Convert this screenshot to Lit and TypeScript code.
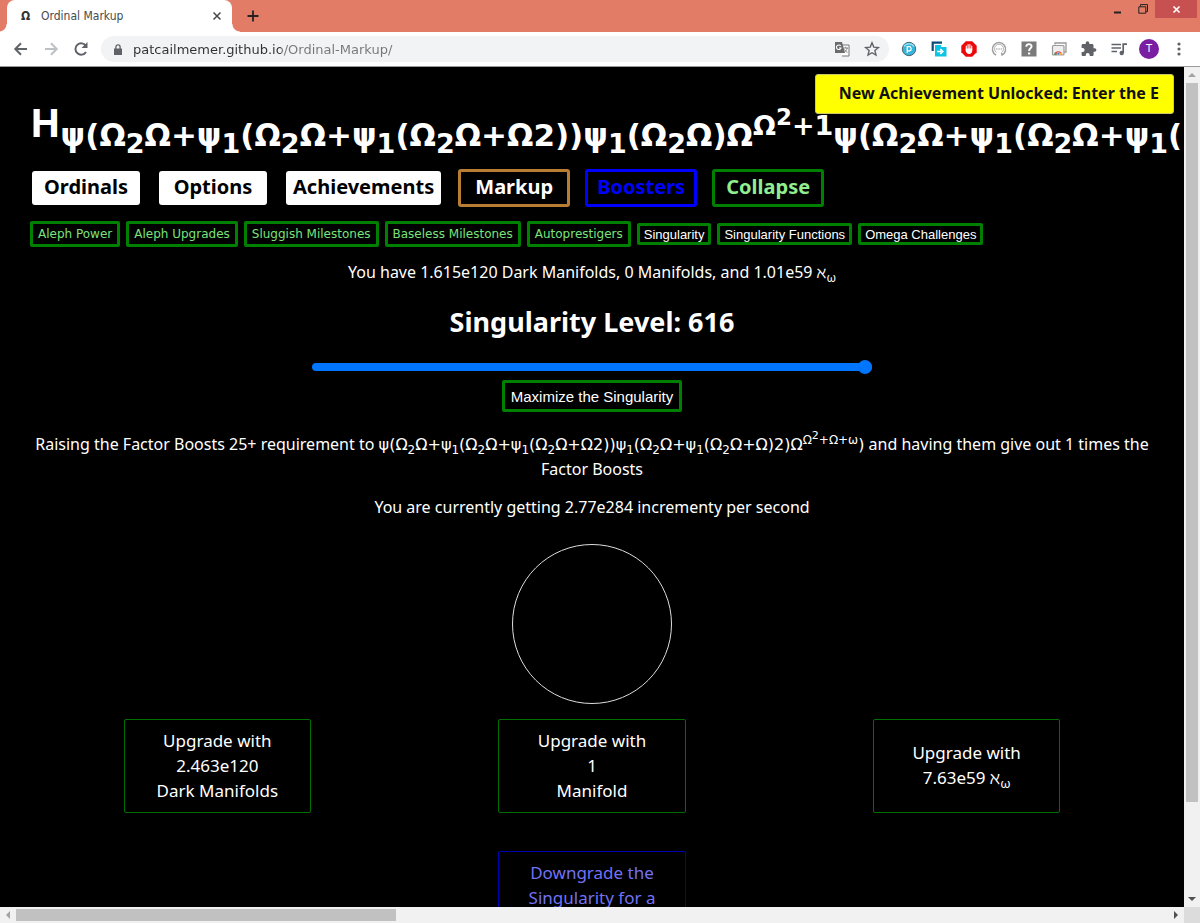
import { LitElement, html, css, svg, TemplateResult } from "lit";
import { customElement, property, state } from "lit/decorators.js";
import { classMap } from "lit/directives/class-map.js";

const icon = (body: TemplateResult, size = 18, box = 18) =>
  html`<svg width=${size} height=${size} viewBox="0 0 ${box} ${box}" aria-hidden="true">${body}</svg>`;

const back = svg`<path d="M15 9H3.5M9 3.3 3.3 9 9 14.7" fill="none" stroke="#5f6368" stroke-width="2"/>`;
const forward = svg`<path d="M3 9h11.500M9 3.300 14.700 9 9 14.700" fill="none" stroke="#bdc1c6" stroke-width="2"/>`;
const reload = svg`<path d="M14 12a5.700 5.700 0 1 1 0-6" fill="none" stroke="#5f6368" stroke-width="2"/><path d="M15.500 2v6H9.500z" fill="#5f6368"/>`;
const lock = svg`<path d="M1 4.500h8V11H1z" fill="#5f6368"/><path d="M2.900 5V3a2.100 2.100 0 0 1 4.200 0v2" fill="none" stroke="#5f6368" stroke-width="1.300"/>`;
const translate = svg`<path d="M7 5h9v11H9" fill="#fff" stroke="#777" stroke-width="1"/><path d="M2 2h7l3 11H2z" fill="#6b6b6b"/><path d="M7.700 5.900A2.300 2.300 0 1 0 8 8H6" fill="none" stroke="#fff" stroke-width="1.100"/><path d="M10.500 8h4.500M12.700 6.800V8m1.500 0c-.4 2-1.500 3.400-2.700 4.200M11.600 9.500c.8 1.600 1.700 2.300 2.900 2.900" fill="none" stroke="#777" stroke-width=".9"/>`;
const star = svg`<path d="m9 2.800 1.800 4.300 4.600.4-3.500 3.100 1.100 4.500-4-2.400-4 2.400 1.100-4.500-3.500-3.100 4.600-.4z" fill="none" stroke="#5f6368" stroke-width="1.400"/>`;
const bubble = svg`<circle cx="9" cy="9" r="6.700" fill="#35b5dc" stroke="#51646d" stroke-width="1"/><path d="M4 6.500a6 6 0 0 1 10 0" fill="none" stroke="#91dff2" stroke-width="1.500"/><path d="M7.200 13V6.700h1.900a2.100 2.100 0 1 1-1.900 3" fill="none" stroke="#fff" stroke-width="1.200"/>`;
const tabs = svg`<path d="M2.700 11V2.700H12" fill="none" stroke="#0b4a75" stroke-width="2.200"/><path d="M5 5h6v2h5.500v9.500H5z" fill="#0cc4e3"/><path d="M7 11.500h5.500M10.300 9.100l2.500 2.400-2.500 2.400" fill="none" stroke="#fff" stroke-width="1.700"/>`;
const hand = svg`<path d="M5.800 1.300h6.400l4.500 4.500v6.400l-4.500 4.500H5.800l-4.500-4.500V5.800z" fill="#ec0909"/><path d="M6.300 10V6M8.100 9V4.600M9.900 9V4.600M11.700 10V6" stroke="#fff" stroke-width="1.100" stroke-linecap="round"/><path d="M5.700 8.500h6.500v2.300c0 2-1.200 3.200-3 3.200-2.300 0-3-1.600-3.500-3z" fill="#fff"/>`;
const ring = svg`<path d="M6 15A6.600 6.600 0 1 1 12 15l-.5-2" fill="none" stroke="#a0a0a0" stroke-width="1.500"/><path d="M6.500 12.500a4.500 4.500 0 1 1 5 0" fill="none" stroke="#b3b3b3" stroke-width="1"/><path d="M6 9h6" stroke="#999" stroke-width="1.200" stroke-dasharray="1.500 .8"/>`;
const question = svg`<path d="M1.500 1.500h15v15h-15z" fill="#7b7b7b"/><path d="M6.300 6.700c0-3.300 5.300-3.300 5.300-.4C11.600 8.400 9.100 8.300 9.100 11" fill="none" stroke="#fff" stroke-width="1.900"/><path d="M8 12.500h2.200v2H8z" fill="#fff"/>`;
const cast = svg`<path d="M5 4.500V3h11v9h-1.800" fill="none" stroke="#999" stroke-width="1.300"/><rect x="2.500" y="5.500" width="11.500" height="9.500" rx="1" fill="#eee" stroke="#999" stroke-width="1.200"/><path d="M4.200 14.800a4.200 4.200 0 0 1 8.300 0z" fill="#e34332"/><path d="M4.200 14.800a4.200 4.200 0 0 1 1-2.700l2 2.700z" fill="#33a552"/><path d="M9.500 14.800l1.500-2.900a4 4 0 0 1 1.500 2.900z" fill="#f6c52b"/><circle cx="8.400" cy="13.700" r="1.400" fill="#3d7de0" stroke="#fff" stroke-width=".5"/>`;
const puzzle = svg`<path d="M14.600 8.200h-1.100V5.400c0-.8-.6-1.400-1.400-1.400H9.300V3a1.800 1.800 0 0 0-3.600 0v1H3c-.8 0-1.400.6-1.400 1.400V8h1a2 2 0 0 1 0 4h-1v2.700c0 .8.600 1.400 1.400 1.400h2.700v-1a2 2 0 0 1 4 0v1h2.500c.8 0 1.400-.6 1.400-1.400v-2.900h1a1.800 1.800 0 0 0 0-3.600z" fill="#5f6368"/>`;
const playlist = svg`<path d="M1.500 4.500h9.500M1.500 8h9.500M1.500 11.500H7" stroke="#5f6368" stroke-width="1.500"/><path d="M13.200 13V4.200H17" fill="none" stroke="#5f6368" stroke-width="1.700"/><circle cx="11.700" cy="13" r="2.200" fill="#5f6368"/>`;
const dots = svg`<circle cx="9" cy="4" r="1.600" fill="#5f6368"/><circle cx="9" cy="9" r="1.600" fill="#5f6368"/><circle cx="9" cy="14" r="1.600" fill="#5f6368"/>`;

@customElement("browser-chrome")
export class BrowserChrome extends LitElement {
  @state() private address = "patcailmemer.github.io/Ordinal-Markup/";

  static styles = css`
    :host { display: block; font-family: "DejaVu Sans Condensed", "Noto Sans", sans-serif; }
    button { border: 0; padding: 0; background: none; font: inherit; display: grid; place-items: center; }
    .strip { height: 32px; background: #e27c66; display: flex; align-items: stretch; padding-left: 7px; }
    .tab { position: relative; width: 225px; background: #fff; border-radius: 8px 8px 0 0; display: flex; align-items: center; box-sizing: border-box; padding: 0 7px 0 14px; color: #45494d; font-size: 12px; }
    .tab::before, .tab::after { content: ""; position: absolute; bottom: 0; width: 8px; height: 8px; }
    .tab::before { left: -8px; background: radial-gradient(circle at 0 0, transparent 7px, #fff 8px); }
    .tab::after { right: -8px; background: radial-gradient(circle at 100% 0, transparent 7px, #fff 8px); }
    .favicon { width: 12px; color: #333; font-size: 12px; font-weight: bold; margin-right: 8px; }
    .title { flex: 1; }
    .close { width: 16px; height: 16px; }
    .new { width: 42px; }
    .window { margin-left: auto; display: flex; height: 18px; padding-right: 3px; }
    .window button { width: 25px; }
    .window .quit { width: 42px; background: #c75050; }
    .bar { height: 34px; background: #fff; border-bottom: 1px solid #9b9b9b; display: flex; align-items: center; padding: 0 6px; }
    .bar button { width: 30px; height: 30px; flex: none; }
    .address { flex: 1; height: 26px; margin: 0 5px; padding: 0 2px 0 12px; border-radius: 13px; background: #f1f3f4; display: flex; align-items: center; }
    .address input { flex: 1; min-width: 0; border: 0; padding: 0; margin-left: 9px; outline: 0; font: 13px "DejaVu Sans", sans-serif; color: transparent; background: linear-gradient(90deg, #303134 148px, #73777b 148px); -webkit-background-clip: text; background-clip: text; }
    .avatar span { width: 20px; height: 20px; line-height: 20px; border-radius: 50%; background: #7b1fa2; color: #fff; font-size: 11px; text-align: center; }
  `;

  render() {
    const extensions: [string, TemplateResult][] = [
      ["Translator", bubble], ["Tab tool", tabs], ["Ad blocker", hand], ["Recorder", ring],
      ["Help", question], ["Remote", cast], ["Extensions", puzzle], ["Media", playlist],
    ];
    return html`
      <div class="strip">
        <div class="tab">
          <span class="favicon">Ω</span><span class="title">Ordinal Markup</span>
          <button class="close" aria-label="Close tab">${icon(svg`<path d="m1.500 1.500 7 7m0-7-7 7" stroke="#45494d" stroke-width="1.500"/>`, 10, 10)}</button>
        </div>
        <button class="new" aria-label="New tab">${icon(svg`<path d="M6 .5v11M.5 6h11" stroke="#222" stroke-width="1.800"/>`, 12, 12)}</button>
        <div class="window">
          <button aria-label="Minimize">${icon(svg`<path d="M1 8.500h7" stroke="#222" stroke-width="2"/>`, 10, 10)}</button>
          <button aria-label="Restore">${icon(svg`<path d="M.8 2.800h7v6.400h-7zM2.500 2.500V.6h7v7H8" fill="none" stroke="#222"/>`, 10, 10)}</button>
          <button class="quit" aria-label="Close">${icon(svg`<path d="m1.500 1.500 6 6m0-6-6 6" stroke="#fff" stroke-width="1.700"/>`, 9, 9)}</button>
        </div>
      </div>
      <div class="bar">
        <button aria-label="Back">${icon(back)}</button>
        <button aria-label="Forward">${icon(forward)}</button>
        <button aria-label="Reload">${icon(reload)}</button>
        <div class="address">
          ${icon(lock, 11, 11)}
          <input type="text" aria-label="Address" spellcheck="false" .value=${this.address} />
          <button aria-label="Translate page">${icon(translate)}</button>
          <button aria-label="Bookmark">${icon(star)}</button>
        </div>
        ${extensions.map(([label, body]) => html`<button aria-label=${label}>${icon(body)}</button>`)}
        <button class="avatar" aria-label="Profile"><span>T</span></button>
        <button aria-label="Menu">${icon(dots)}</button>
      </div>
    `;
  }
}

@customElement("scroll-bar")
export class ScrollBar extends LitElement {
  @property({ type: Boolean, reflect: true }) vertical = false;
  @property({ type: Number }) share = 50;

  static styles = css`
    :host { display: flex; background: #f1f1f1; height: 16px; }
    :host([vertical]) { flex-direction: column; height: auto; width: 16px; }
    .end { width: 16px; height: 16px; flex: none; display: grid; place-items: center; }
    .track { flex: 1; padding: 2px 0; }
    :host([vertical]) .track { padding: 0 2px; }
    .thumb { background: #c1c1c1; height: 100%; }
  `;

  render() {
    const size = this.vertical ? `height:${this.share}%` : `width:${this.share}%`;
    const [start, end] = this.vertical
      ? [svg`<path d="M0 6 4 2l4 4z" fill="#a3a3a3"/>`, svg`<path d="m0 2 4 4 4-4z" fill="#505050"/>`]
      : [svg`<path d="M6 0 2 4l4 4z" fill="#a3a3a3"/>`, svg`<path d="m2 0 4 4-4 4z" fill="#505050"/>`];
    return html`
      <div class="end">${icon(start, 8, 8)}</div>
      <div class="track"><div class="thumb" style=${size}></div></div>
      <div class="end">${icon(end, 8, 8)}</div>
    `;
  }
}

@customElement("app-root")
export class AppRoot extends LitElement {
  @state() private level = 616;

  static styles = css`
    :host { display: flex; flex-direction: column; height: 100vh; overflow: hidden; background: #000; color: #fff; font-family: "Noto Sans", "DejaVu Sans", sans-serif; font-size: 16px; line-height: 25px; }
    .view { flex: 1; min-height: 0; display: grid; grid-template: minmax(0, 1fr) 16px / minmax(0, 1fr) 16px; }
    .corner { background: #dcdcdc; }
    .page { position: relative; overflow: hidden; padding: 29px 30px 0; }
    .toast { position: absolute; top: 7px; right: 10px; box-sizing: border-box; height: 40px; padding: 0 14px 0 23px; border: 1px solid #c9c96a; border-radius: 3px; background: #ff0; color: #111; font-weight: bold; line-height: 36px; white-space: nowrap; }
    button { box-sizing: border-box; margin: 0; background: #000; border-radius: 3px; }
    h1 { margin: 0; height: 73px; font: bold 40px/52px "Noto Sans", sans-serif; white-space: nowrap; }
    sub, sup { line-height: 0; }
    h1 sub { font-family: "DejaVu Sans", sans-serif; font-size: 31px; }
    h1 sub sub, h1 sub sup { font-size: 27px; }
    h1 sup sup { font-size: 23px; }
    .formula { font-family: "DejaVu Sans", sans-serif; }
    p sub, p sup { font-size: 12px; }
    p sup sup { font-size: 11px; }
    .card sub { font-size: 13px; }
    .tabs { display: flex; gap: 15px; }
    .tabs button { min-width: 112px; height: 38px; padding: 0 5px 3px; border: 3px solid; font: bold 20px "Noto Sans", sans-serif; color: #fff; }
    .tabs .plain { background: #fff; background-clip: padding-box; color: #000; border: 2px solid transparent; border-radius: 5px; padding: 0 7px 3px; }
    .tabs .markup { border-color: #b87d33; }
    .tabs .boosters { border-color: #00f; color: #00f; }
    .tabs .collapse { border-color: #008000; color: #90ee90; }
    .subtabs { display: flex; align-items: center; gap: 6px; margin-top: 14px; }
    .subtabs button { height: 22px; padding: 0 4px; border: 3px solid #008000; border-radius: 2px; font: 13px "Liberation Sans", sans-serif; color: #fff; }
    .subtabs .wide { height: 26px; padding: 0 5px; font: 12px "DejaVu Sans", sans-serif; color: #7be37b; }
    p { margin: 13px 0 0; text-align: center; }
    h2 { margin: 23px 0 0; font-size: 27px; line-height: 27px; text-align: center; }
    .slider { display: block; width: 560px; max-width: 100%; height: 14px; margin: 25px auto 6px; appearance: none; background: none; }
    .slider::-webkit-slider-runnable-track { height: 8px; border-radius: 4px; background: #0075ff; }
    .slider::-webkit-slider-thumb { appearance: none; width: 14px; height: 14px; margin-top: -3px; border-radius: 50%; background: #0075ff; }
    .max { height: 32px; padding: 0 6px; border: 3px solid #008000; border-radius: 2px; font: 15px "Liberation Sans", sans-serif; color: #fff; display: block; margin: 0 auto; }
    .max + p { margin-top: 20px; }
    .orb { display: block; width: 160px; height: 160px; margin: 24px auto 15px; }
    .cards { display: grid; grid-template-columns: repeat(3, 1fr); gap: 38px 0; justify-items: center; }
    .card { width: 50%; height: 94px; padding: 0 18px 2px; border: 1px solid #006e00; border-radius: 2px; font: 17px/25px "Noto Sans", "DejaVu Sans", sans-serif; color: #fff; }
    .down { grid-column: 2; border-color: #0000b4; color: #7272f5; }
  `;

  private psi(tail: TemplateResult) {
    return html`ψ(Ω<sub>2</sub>Ω+ψ<sub>1</sub>(Ω<sub>2</sub>Ω+ψ<sub>1</sub>(Ω<sub>2</sub>Ω+Ω2))ψ<sub>1</sub>(Ω<sub>2</sub>Ω${tail}`;
  }

  private tabs = [
    ["Ordinals", "plain"], ["Options", "plain"], ["Achievements", "plain"],
    ["Markup", "markup"], ["Boosters", "boosters"], ["Collapse", "collapse"],
  ];

  private subtabs: [string, boolean][] = [
    ["Aleph Power", true], ["Aleph Upgrades", true], ["Sluggish Milestones", true],
    ["Baseless Milestones", true], ["Autoprestigers", true],
    ["Singularity", false], ["Singularity Functions", false], ["Omega Challenges", false],
  ];

  render() {
    return html`
      <browser-chrome></browser-chrome>
      <div class="view">
        <main class="page">
          <h1>H<sub>${this.psi(html`)Ω<sup>Ω<sup>2</sup>+1</sup>`)}ψ(Ω<sub>2</sub>Ω+ψ<sub>1</sub>(Ω<sub>2</sub>Ω+ψ<sub>1</sub>(</sub></h1>
          <nav class="tabs">${this.tabs.map(([name, kind]) => html`<button class=${kind}>${name}</button>`)}</nav>
          <nav class="subtabs">${this.subtabs.map(([name, wide]) => html`<button class=${classMap({ wide })}>${name}</button>`)}</nav>
          <p>You have 1.615e120 Dark Manifolds, 0 Manifolds, and 1.01e59 ℵ<sub>ω</sub></p>
          <h2><label for="level">Singularity Level: ${this.level}</label></h2>
          <input id="level" class="slider" type="range" min="0" max="616" .value=${String(this.level)}
            @input=${(e: Event) => (this.level = Number((e.target as HTMLInputElement).value))} />
          <button class="max" @click=${() => (this.level = 616)}>Maximize the Singularity</button>
          <p>Raising the Factor Boosts 25+ requirement to <span class="formula">${this.psi(html`+ψ<sub>1</sub>(Ω<sub>2</sub>Ω+Ω)2)Ω<sup>Ω<sup>2</sup>+Ω+ω</sup>`)})</span> and having them give out 1 times the Factor Boosts</p>
          <p>You are currently getting 2.77e284 incrementy per second</p>
          <svg class="orb" viewBox="0 0 160 160" role="img" aria-label="Singularity"><circle cx="80" cy="80" r="79.500" fill="none" stroke="#ddd"/></svg>
          <div class="cards">
            <button class="card">Upgrade with<br />2.463e120<br />Dark Manifolds</button>
            <button class="card">Upgrade with<br />1<br />Manifold</button>
            <button class="card">Upgrade with<br />7.63e59 ℵ<sub>ω</sub></button>
            <button class="card down">Downgrade the Singularity for a refund</button>
          </div>
          <div class="toast" role="status">New Achievement Unlocked: Enter the E</div>
        </main>
        <scroll-bar vertical .share=${89}></scroll-bar>
        <scroll-bar .share=${33}></scroll-bar>
        <div class="corner"></div>
      </div>
    `;
  }
}
